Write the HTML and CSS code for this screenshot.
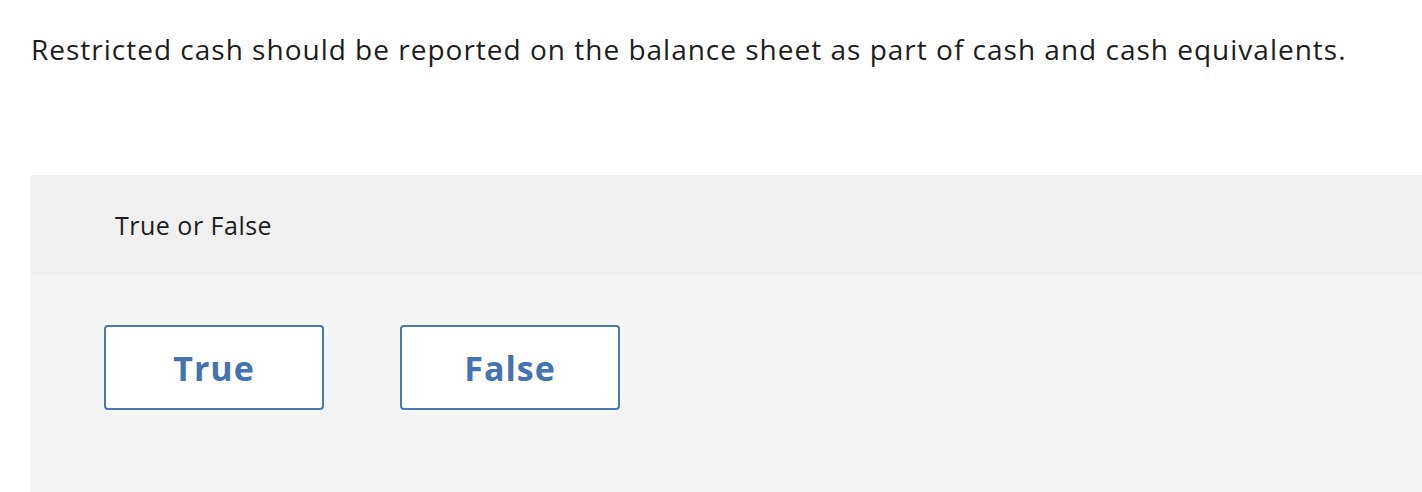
FILE: index.html
```html
<!DOCTYPE html>
<html>
<head>
<meta charset="utf-8">
<link rel="stylesheet" href="styles.css">
</head>
<body>
<div class="page">
  <p class="question">Restricted cash should be reported on the balance sheet as part of cash and cash equivalents.</p>
  <div class="panel">
    <div class="panel-head">True or False</div>
    <div class="panel-body">
      <button class="choice">True</button>
      <button class="choice">False</button>
    </div>
  </div>
</div>
</body>
</html>
```
FILE: styles.css
```css
html, body {
  margin: 0;
  padding: 0;
  background: #ffffff;
  overflow: hidden;
}
body {
  font-family: "Open Sans", "Lato", sans-serif;
  color: #1d1d1d;
}
.page {
  padding: 0 0 0 30px;
  height: 492px;
  display: flex;
  flex-direction: column;
}
.question {
  margin: 0;
  padding: 31px 0 0 1px;
  font-size: 28px;
  line-height: 36px;
  letter-spacing: 1px;
  height: 175px;
  box-sizing: border-box;
}
.panel {
  flex: 1;
  background: #f5f5f5;
  border-top-left-radius: 4px;
  overflow: hidden;
}
.panel-head {
  height: 100px;
  background: #f0f0f0;
  display: flex;
  align-items: center;
  padding-left: 85px;
  font-size: 25px;
  letter-spacing: 0.5px;
  color: #1d1d1d;
}
.panel-body {
  display: flex;
  gap: 76px;
  padding: 50px 0 0 74px;
}
.choice {
  width: 220px;
  height: 85px;
  box-sizing: border-box;
  background: #ffffff;
  border: 2px solid #4a77b4;
  border-radius: 4px;
  font-family: "Open Sans", "Lato", sans-serif;
  font-weight: 700;
  font-size: 34px;
  letter-spacing: 1px;
  color: #4572b0;
  padding: 0;
  cursor: pointer;
}
```
